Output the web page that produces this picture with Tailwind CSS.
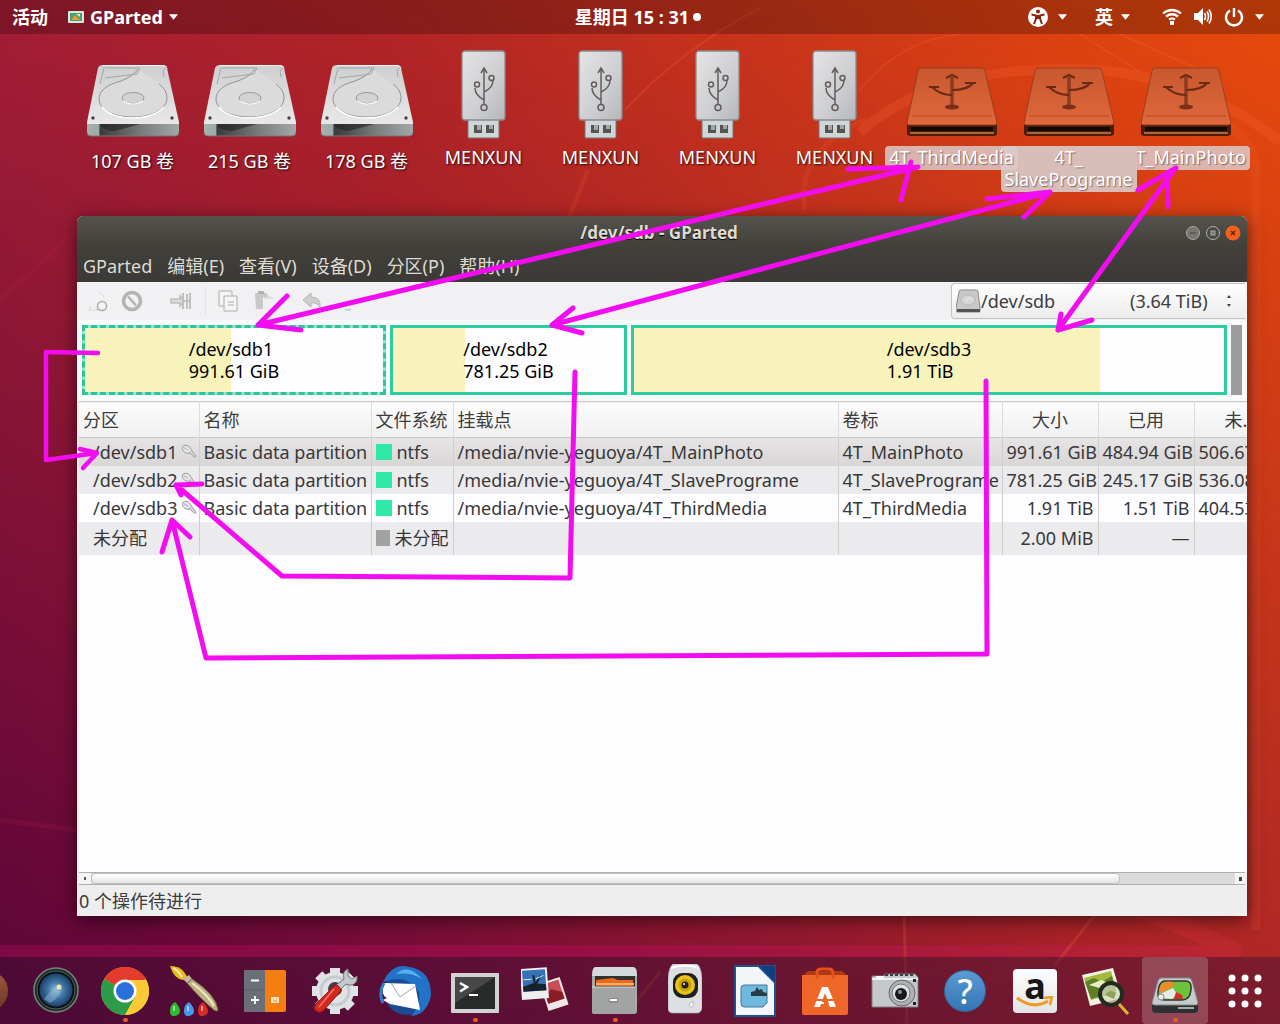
<!DOCTYPE html>
<html lang="zh-CN">
<head>
    <meta charset="UTF-8">
    <meta name="viewport" content="width=device-width, initial-scale=1.0">
    <title>/dev/sdb - GParted</title>
    <script src="https://cdn.jsdelivr.net/npm/@tailwindcss/browser@4"></script>
</head>
<body class="relative flex min-h-screen flex-col overflow-hidden bg-[#8a1030] font-['Noto_Sans','Noto_Sans_CJK_SC',sans-serif] text-[18px] leading-[22px] text-[#3c3c3c]">

    <!-- Wallpaper -->
    <svg class="absolute inset-0 -z-10 h-full w-full" viewBox="0 0 1280 1024" preserveAspectRatio="none" aria-hidden="true">
        <defs>
            <linearGradient id="wpTop"><stop offset="0" stop-color="#a51f35"/><stop offset=".3" stop-color="#b42526"/><stop offset=".55" stop-color="#c8331c"/><stop offset=".8" stop-color="#dc4211"/><stop offset="1" stop-color="#e74b0b"/></linearGradient>
            <linearGradient id="wpBottom"><stop offset="0" stop-color="#5a0439"/><stop offset=".3" stop-color="#6f0a39"/><stop offset=".6" stop-color="#8a1531"/><stop offset=".85" stop-color="#a31f2a"/><stop offset="1" stop-color="#ac2527"/></linearGradient>
            <linearGradient id="wpFade" x2="0" y2="1"><stop offset="0" stop-color="#000"/><stop offset="1" stop-color="#fff"/></linearGradient>
            <linearGradient id="wpBand"><stop offset="0" stop-color="#7e0845"/><stop offset=".5" stop-color="#981044"/><stop offset="1" stop-color="#bb2630"/></linearGradient>
            <mask id="wpMask"><rect width="1280" height="1024" fill="url(#wpFade)"/></mask>
        </defs>
        <rect width="1280" height="1024" fill="url(#wpTop)"/>
        <rect width="1280" height="1024" fill="url(#wpBottom)" mask="url(#wpMask)"/>
        <rect y="945" width="1238" height="12" fill="url(#wpBand)"/>
        <path d="M1160 915l30 4 52 26v10l-12 1-100-41z" fill="#bd2a2e" opacity=".7"/>
        <g fill="none" stroke="#ff6a3a" stroke-opacity=".22">
            <path d="M860 132Q930 70 1060 69T1280 142" stroke-width="10"/>
            <path d="M860 90Q900 40 960 34M1080 34l60 38M1120 34l80 36M625 110Q680 50 760 8" stroke-width="2"/>
            <path d="M1220 120q36 20 36 50v760" stroke-width="9" stroke-opacity=".13"/>
            <path d="M588 170l-20 50M805 210q-10-60 60-90" stroke-width="5" stroke-opacity=".14"/>
            <path d="M1095 915l-40 50M904 915l3 109M660 972l-26 32" stroke-width="3"/>
        </g>
        <path d="M0 300L77 230M0 820l77 10" stroke="#c02050" stroke-opacity=".15" stroke-width="5"/>
    </svg>

    <!-- Shared drawings -->
    <svg class="absolute h-0 w-0" aria-hidden="true">
        <defs>
            <linearGradient id="metal" x2="0" y2="1"><stop offset="0" stop-color="#cfcfd0"/><stop offset="1" stop-color="#e9e7e8"/></linearGradient>
            <linearGradient id="metalFront"><stop offset="0" stop-color="#aab0b0"/><stop offset=".13" stop-color="#9aa"/><stop offset=".14" stop-color="#3a3a3a"/><stop offset=".6" stop-color="#7a7c7d"/><stop offset="1" stop-color="#a5a8a9"/></linearGradient>
            <linearGradient id="stick" x2="1" y2="1"><stop offset="0" stop-color="#e4e4e5"/><stop offset=".6" stop-color="#cdced1"/><stop offset="1" stop-color="#b4b7ba"/></linearGradient>
            <linearGradient id="orangeTop" x2="0" y2="1"><stop offset="0" stop-color="#c8582f"/><stop offset="1" stop-color="#e0683c"/></linearGradient>
            <symbol id="harddisk" viewBox="0 0 96 96">
                <path d="M2 73h92v10q0 3-4 3H6q-4 0-4-3z" fill="url(#metalFront)"/>
                <path d="M15 74h40L30 81q-12 0-15-7z" fill="#222" opacity=".6"/>
                <path d="M2 82q0 4 4 4h84q4 0 4-4" fill="none" stroke="#777" stroke-width="1"/>
                <path d="M18 15h60q3 0 4 3l12 54v2H2v-2l11-54q1-3 5-3z" fill="url(#metal)"/>
                <path d="M18 15.500h60q3 0 4 3" fill="none" stroke="#f6f6f6" stroke-width="1"/>
                <path d="M53 19Q49 26 36 31C21 35 14 41 14 49c0 11 15 18 34 18s34-8 34-19c0-6-3-10-8-14" fill="#dcdbdc" stroke="#8f9296" stroke-width="1"/>
                <path d="M17 57c5 7 17 11 31 11s26-5 31-11" fill="none" stroke="#fff" stroke-width="1.500"/>
                <path d="M19 18l-4 16M20 18h35l-3 6-32 4M79 27l-1-6 4-5" fill="none" stroke="#9ba9ad" stroke-width="1"/>
                <ellipse cx="48" cy="48" rx="11" ry="5.500" fill="#d4d3d4" stroke="#999" stroke-width="1"/>
                <path d="M38 51q10 6 20 0" fill="none" stroke="#fff" stroke-width="1.200"/>
                <circle cx="8" cy="68" r="1.700" fill="#444"/><circle cx="87" cy="68" r="1.700" fill="#444"/>
            </symbol>
            <symbol id="usbstick" viewBox="0 0 96 96">
                <rect x="32" y="69" width="31" height="19" rx="1" fill="#cfd6d8" stroke="#777" stroke-width="1"/>
                <rect x="26" y="1" width="43" height="69" rx="3" fill="url(#stick)" stroke="#8b8b8c" stroke-width="1.300"/>
                <path d="M38 75h8v8h-8zM50 75h8v8h-8z" fill="#545452"/><path d="M41 75h4v5h-4zM53 75h4v4h-4z" fill="#a5a5a5"/>
                <g fill="none" stroke="#665c5c" stroke-width="1.500"><path d="M48 54V19M45 23l3-5 3 5M48 50Q39 45 39 38M48 42q9-4 9-12"/><circle cx="41" cy="34.500" r="2.500"/><circle cx="55.500" cy="28" r="2.500"/><circle cx="48" cy="57.500" r="3"/></g>
            </symbol>
            <symbol id="usbdisk" viewBox="0 0 96 96">
                <path d="M3 74h90v9q0 3-4 3H7q-4 0-4-3z" fill="#4a1d0c"/><path d="M7 77h82v4H7z" fill="#160803"/><path d="M6 82h84v2H6z" fill="#a86638"/>
                <path d="M16 18h62q2 0 3 3l12 52q0 2-2 2H5q-2 0-2-2l11-52q1-3 2-3z" fill="url(#orangeTop)" stroke="#8a3a1a" stroke-width=".8"/>
                <path d="M8 66h80" stroke="#b04a25" stroke-width="1"/>
                <g fill="none" stroke="#6b2a14" stroke-width="2.200"><path d="M48 57V27" stroke="#8a3c20" stroke-width="3.500"/><path d="M42 28l6-3 6 3"/><path d="M48 45Q36 45 28 37M25 37h10M48 40q16 0 21-7M61 33h11"/></g>
                <ellipse cx="48" cy="57" rx="7" ry="2.600" fill="#7a2f16"/>
            </symbol>
            <symbol id="key" viewBox="0 0 18 18"><ellipse cx="6.500" cy="6" rx="5.500" ry="4" transform="rotate(35 6.500 6)" fill="#e6e5e5" stroke="#9a9999"/><path d="M3 4l5 3" stroke="#aaa"/><path d="M9 9l6 6 2-1-5-7" fill="#d5d3d4" stroke="#9a9999"/></symbol>
            <symbol id="caret" viewBox="0 0 10 6"><path d="M0 0h10L5 6z" fill="#fff"/></symbol>
        </defs>
    </svg>

    <!-- Top panel -->
    <header class="flex h-[34px] shrink-0 items-center justify-between bg-black/24 pl-3 font-bold text-white [text-shadow:0_1px_2px_rgb(0_0_0/0.7)]">
        <div class="flex flex-1 items-center gap-5">
            <button>活动</button>
            <button class="flex items-center gap-[6px]">
                <svg class="h-3 w-4" viewBox="0 0 16 12" aria-hidden="true"><rect width="16" height="12" rx="1" fill="#d8e6df"/><rect x="2" y="2" width="12" height="8" fill="#4aa070"/><path d="M3 9l4-5 5 5z" fill="#e2a02c"/><path d="M8 3h4v3z" fill="#f5e9a0"/></svg>
                GParted
                <svg class="h-[6px] w-[9px]" aria-hidden="true"><use href="#caret"/></svg>
            </button>
        </div>
        <button class="flex items-center gap-1">星期日 15 : 31<span class="h-2 w-2 rounded-full bg-white"></span></button>
        <div class="flex flex-1 items-center justify-end pr-4">
            <button class="mr-7 flex items-center gap-[10px]" aria-label="辅助功能">
                <svg class="h-5 w-5" viewBox="0 0 20 20"><circle cx="10" cy="10" r="10" fill="#fff"/><circle cx="10" cy="4.500" r="2" fill="#8d2410"/><path d="M3.500 7.500L8 8.500v3l-2 5.500M16.500 7.500L12 8.500v3l2 5.500M8 9.500h4M10 8v4" fill="none" stroke="#8d2410" stroke-width="2"/></svg>
                <svg class="h-[6px] w-[9px]"><use href="#caret"/></svg>
            </button>
            <button class="mr-8 flex items-center gap-2">英<svg class="h-[6px] w-[9px]" aria-hidden="true"><use href="#caret"/></svg></button>
            <button class="flex items-center gap-[11px]" aria-label="系统菜单">
                <svg class="h-5 w-5" viewBox="0 0 20 20" fill="none" stroke="#fff" stroke-width="2.200"><path d="M1 6.500Q10-.5 19 6.500M4 9.500q6-4.500 12 0M7 12.500q3-2 6 0"/><path d="M8 14h4v4H8z" fill="#fff" stroke="none"/></svg>
                <svg class="h-5 w-5" viewBox="0 0 20 20" fill="none" stroke="#fff" stroke-width="1.600"><path d="M1 6h4l5-5v17l-5-5H1z" fill="#fff" stroke="none"/><path d="M11.500 6q2 3.500 0 7M14 4.500q3 5 0 10M16 2.500q4.500 7 0 14"/></svg>
                <svg class="h-5 w-5" viewBox="0 0 20 20" fill="none" stroke="#fff" stroke-width="2.400"><path d="M6 3.500a8 8 0 1 0 8 0M10 1v9"/></svg>
                <svg class="h-[6px] w-[9px]"><use href="#caret"/></svg>
            </button>
        </div>
    </header>

    <!-- Desktop icons -->
    <section class="flex h-[182px] shrink-0 items-start pt-4 pl-[74px] text-center whitespace-nowrap text-white *:flex *:w-[117px] *:shrink-0 *:flex-col *:items-center [text-shadow:1px_1px_2px_rgb(0_0_0/0.8)]">
        <div><svg class="h-24 w-24"><use href="#harddisk"/></svg><span class="leading-[30px]">107 GB 卷</span></div>
        <div><svg class="h-24 w-24"><use href="#harddisk"/></svg><span class="leading-[30px]">215 GB 卷</span></div>
        <div><svg class="h-24 w-24"><use href="#harddisk"/></svg><span class="leading-[30px]">178 GB 卷</span></div>
        <div><svg class="h-24 w-24"><use href="#usbstick"/></svg><span>MENXUN</span></div>
        <div><svg class="h-24 w-24"><use href="#usbstick"/></svg><span>MENXUN</span></div>
        <div><svg class="h-24 w-24"><use href="#usbstick"/></svg><span>MENXUN</span></div>
        <div><svg class="h-24 w-24"><use href="#usbstick"/></svg><span>MENXUN</span></div>
        <div class="relative z-10"><svg class="h-24 w-24"><use href="#usbdisk"/></svg><span class="rounded bg-[#dccaca]/85 px-1 pb-[2px] [text-shadow:1px_1px_1px_rgb(90_70_70/0.7)]">4T_ThirdMedia</span></div>
        <div class="relative"><svg class="h-24 w-24"><use href="#usbdisk"/></svg><span class="rounded bg-[#d9bdb9] px-1 pb-[2px] [text-shadow:1px_1px_1px_rgb(90_70_70/0.7)]">4T_<br>SlavePrograme</span></div>
        <div><svg class="h-24 w-24"><use href="#usbdisk"/></svg><span class="rounded bg-[#dccaca]/85 px-1 pb-[2px] [text-shadow:1px_1px_1px_rgb(90_70_70/0.7)]">4T_MainPhoto</span></div>
    </section>

    <!-- GParted window -->
    <main class="mr-[33px] mb-[41px] ml-[77px] flex flex-1 flex-col overflow-hidden rounded-t-md bg-[#efeeef] shadow-[0_4px_18px_rgb(0_0_0/0.55)]">
        <div class="bg-linear-to-b from-[#55534c] via-[#403f3a] to-[#3b3a36] text-[#dfdbd2]">
            <div class="flex h-[33px] items-center">
                <span class="flex-1"></span>
                <h1 class="text-[17px] font-bold [text-shadow:0_1px_1px_#000]">/dev/sdb - GParted</h1>
                <div class="flex flex-1 justify-end gap-1 pr-[6px]">
                    <button aria-label="最小化"><svg class="h-4 w-4" viewBox="0 0 16 16"><circle cx="8" cy="8" r="6.500" fill="#777670" stroke="#aaa9a2"/><path d="M5 8h6" stroke="#55544f" stroke-width="1.500"/></svg></button>
                    <button aria-label="最大化"><svg class="h-4 w-4" viewBox="0 0 16 16"><circle cx="8" cy="8" r="6.500" fill="#4a4944" stroke="#b5b4ad"/><rect x="6" y="6" width="4" height="4" fill="#777" stroke="#aaa"/></svg></button>
                    <button aria-label="关闭"><svg class="h-4 w-4" viewBox="0 0 16 16"><circle cx="8" cy="8" r="7.500" fill="#f0601f"/><path d="M6 6l4 4m0-4l-4 4" stroke="#6a2408" stroke-width="1.500"/></svg></button>
                </div>
            </div>
            <nav class="flex h-[33px] items-center gap-[15px] pl-[6px]">
                <button>GParted</button>
                <button>编辑(E)</button>
                <button>查看(V)</button>
                <button>设备(D)</button>
                <button>分区(P)</button>
                <button>帮助(H)</button>
            </nav>
        </div>

        <!-- Toolbar -->
        <div class="flex h-[38px] items-center justify-between bg-[#f1f0f2] pr-[2px] pl-2">
            <div class="flex items-center">
                <button class="mr-3" aria-label="新建"><svg class="h-6 w-6" viewBox="0 0 24 24" fill="none" stroke="#c5c4c4"><path d="M3 21h9M14 3l5 5" stroke="#d8d7d8"/><circle cx="17" cy="17" r="4.500" fill="#f5f5f5" stroke="#aaa" stroke-width="1.500"/><path d="M4 19l2-1M11 20l3 1"/></svg></button>
                <button class="mr-6" aria-label="删除"><svg class="h-6 w-6" viewBox="0 0 24 24" fill="none" stroke="#b5b3b2" stroke-width="3.500"><circle cx="11" cy="12" r="8.500"/><path d="M7 7.500l8 9" stroke-width="2.500"/></svg></button>
                <button class="mr-3" aria-label="调整大小/移动"><svg class="h-6 w-6" viewBox="0 0 24 24" fill="none" stroke="#c0bfbf" stroke-width="1.500"><path d="M2 10h9V7l4 5-4 5v-3H2z" fill="#dcdbdc"/><path d="M14 4v16M18 5v15M21 4v16M14 12h8" stroke-width="2"/></svg></button>
                <span class="mr-3 h-7 w-px bg-[#e2e1e3]"></span>
                <button class="mr-3" aria-label="复制"><svg class="h-6 w-6" viewBox="0 0 24 24" fill="#f5f5f6" stroke="#c3c2c3" stroke-width="1.500"><rect x="1" y="2" width="13" height="15" rx="1"/><rect x="6" y="7" width="13" height="15" rx="1"/><path d="M10 13h6M10 16h6"/></svg></button>
                <button class="mr-6" aria-label="粘贴"><svg class="h-6 w-6" viewBox="0 0 24 24" fill="#c9c8c8"><path d="M1 4h11l3 4H9v12H2z"/><path d="M4 2h6v3H4z" fill="#b3b2b2"/><path d="M10 9h9" stroke="#ddd" stroke-width="2"/></svg></button>
                <button class="mr-4" aria-label="撤销"><svg class="h-6 w-6" viewBox="0 0 24 24"><path d="M1 11l8-7v4q10 0 9 10-3-5-9-4v4z" fill="#cfcece" stroke="#b7b6b6"/></svg></button>
                <button aria-label="应用"><svg class="h-6 w-6" viewBox="0 0 24 24"><path d="M3 20q3 2 6 0" fill="none" stroke="#b8e4cd" stroke-width="2"/></svg></button>
            </div>
            <label class="flex h-9 items-center rounded-l border border-r-0 border-[#c4c2c3] bg-linear-to-b from-white to-[#ececed] pr-[14px] pl-1" aria-label="设备">
                <svg class="h-6 w-[25px]" viewBox="0 0 25 24" aria-hidden="true"><path d="M5 1h15q2 0 2 2l2 16v3q0 1-1 1H1q-1 0-1-1v-3L3 3q0-2 2-2z" fill="#c9c9ca" stroke="#8a8a8a"/><path d="M1 20h23v3H1z" fill="#555"/><ellipse cx="12" cy="11" rx="7" ry="5" fill="#d6d6d7" stroke="#bbb"/><path d="M9 12q3-4 7-2" fill="none" stroke="#eee"/></svg>
                <select class="w-[246px] appearance-none bg-transparent">
                    <option>/dev/sdb&nbsp;&nbsp;&nbsp;&nbsp;&nbsp;&nbsp;&nbsp;&nbsp;&nbsp;&nbsp;&nbsp;&nbsp;&nbsp;&nbsp;&nbsp;&nbsp;(3.64 TiB)</option>
                </select>
                <svg class="h-3 w-1" viewBox="0 0 4 12" aria-hidden="true"><path d="M0 3l2-3 2 3zM0 9l2 3 2-3z" fill="#444"/></svg>
            </label>
        </div>

        <!-- Disk map -->
        <div class="flex h-[81px] gap-1 bg-[#fafafb] px-[5px] pt-[5px] pb-[6px] text-black">
            <div class="relative flex basis-0 grow-[298] items-center justify-center border-3 border-dashed border-[#2cc498] bg-[#8ee9cb]">
                <div class="absolute inset-0 bg-[#fdfdff]"></div>
                <div class="absolute inset-y-0 left-0 bg-[#f8f3bb]" style="width:49%"></div>
                <p class="relative">/dev/sdb1<br>991.61 GiB</p>
            </div>
            <div class="relative flex basis-0 grow-[231] items-center justify-center border-3 border-[#29cd9e] bg-[#fdfdff]">
                <div class="absolute inset-y-0 left-0 bg-[#f8f3bb]" style="width:31%"></div>
                <p class="relative">/dev/sdb2<br>781.25 GiB</p>
            </div>
            <div class="relative flex basis-0 grow-[590] items-center justify-center border-3 border-[#29cd9e] bg-[#fdfdff]">
                <div class="absolute inset-y-0 left-0 bg-[#f8f3bb]" style="width:79%"></div>
                <p class="relative">/dev/sdb3<br>1.91 TiB</p>
            </div>
            <div class="w-[11px] bg-[#9c9b9d]"></div>
        </div>

        <!-- Partition list -->
        <div class="ml-[2px] flex-1 overflow-hidden bg-[#fdfcfe]">
            <table class="w-full table-fixed border-collapse whitespace-nowrap">
                <colgroup>
                    <col class="w-[120px]"><col class="w-[172px]"><col class="w-[82px]"><col class="w-[385px]"><col class="w-[164px]"><col class="w-[96px]"><col class="w-[96px]"><col>
                </colgroup>
                <thead class="border-y border-[#c9c7c8] bg-linear-to-b from-[#fdfcfd] to-[#f1f0f1]">
                    <tr class="h-9 text-left *:overflow-hidden *:border-r *:border-[#dddbdc] *:px-1 *:font-normal *:last:border-r-0">
                        <th>分区</th><th>名称</th><th>文件系统</th><th>挂载点</th><th>卷标</th><th class="text-center">大小</th><th class="text-center">已用</th><th class="pr-0! pl-[30px]!">未...</th>
                    </tr>
                </thead>
                <tbody class="text-[#383838] *:*:overflow-hidden *:*:border-r *:*:border-[#cfcdce] *:*:px-1 *:*:last:border-r-0 *:*:last:pr-0">
                    <tr class="h-7 bg-linear-to-b from-[#e6e4e5] to-[#d9d6d6]">
                        <td><span class="flex items-center gap-1 pl-[10px]">/dev/sdb1<svg class="h-[18px] w-4 shrink-0"><use href="#key"/></svg></span></td>
                        <td>Basic data partition</td>
                        <td><span class="flex items-center gap-[5px]"><i class="h-4 w-4 bg-[#2fe9a6]"></i>ntfs</span></td>
                        <td>/media/nvie-yeguoya/4T_MainPhoto</td>
                        <td>4T_MainPhoto</td>
                        <td class="text-right">991.61 GiB</td>
                        <td class="text-right">484.94 GiB</td>
                        <td>506.67 GiB</td>
                    </tr>
                    <tr class="h-7 bg-[#ebeaec]">
                        <td><span class="flex items-center gap-1 pl-[10px]">/dev/sdb2<svg class="h-[18px] w-4 shrink-0"><use href="#key"/></svg></span></td>
                        <td>Basic data partition</td>
                        <td><span class="flex items-center gap-[5px]"><i class="h-4 w-4 bg-[#2fe9a6]"></i>ntfs</span></td>
                        <td>/media/nvie-yeguoya/4T_SlavePrograme</td>
                        <td>4T_SlavePrograme</td>
                        <td class="text-right">781.25 GiB</td>
                        <td class="text-right">245.17 GiB</td>
                        <td>536.08 GiB</td>
                    </tr>
                    <tr class="h-7">
                        <td><span class="flex items-center gap-1 pl-[10px]">/dev/sdb3<svg class="h-[18px] w-4 shrink-0"><use href="#key"/></svg></span></td>
                        <td>Basic data partition</td>
                        <td><span class="flex items-center gap-[5px]"><i class="h-4 w-4 bg-[#2fe9a6]"></i>ntfs</span></td>
                        <td>/media/nvie-yeguoya/4T_ThirdMedia</td>
                        <td>4T_ThirdMedia</td>
                        <td class="text-right">1.91 TiB</td>
                        <td class="text-right">1.51 TiB</td>
                        <td>404.53 GiB</td>
                    </tr>
                    <tr class="h-[33px] bg-[#ebeaec]">
                        <td><span class="pl-[10px]">未分配</span></td>
                        <td></td>
                        <td><span class="flex items-center gap-[5px]"><i class="h-4 w-4 bg-[#a3a2a3]"></i>未分配</span></td>
                        <td></td>
                        <td></td>
                        <td class="text-right">2.00 MiB</td>
                        <td class="text-right">—</td>
                        <td></td>
                    </tr>
                </tbody>
            </table>
        </div>

        <!-- Horizontal scrollbar -->
        <div class="mx-[2px] flex h-[13px] items-stretch border-y border-[#b0aeaf] bg-[#dddcdd]">
            <span class="flex w-3 items-center justify-center bg-[#f5f4f5]"><i class="h-[3px] w-[2px] bg-[#555]"></i></span>
            <span class="basis-0 grow-[1028] rounded border border-[#c0bebf] bg-linear-to-b from-white to-[#e6e4e5]"></span>
            <span class="basis-0 grow-[115]"></span>
            <span class="flex w-[10px] items-center justify-center bg-[#f5f4f5]"><i class="h-[4px] w-[3px] bg-[#444]"></i></span>
        </div>
        <footer class="flex h-[31px] items-center pl-[2px]">0 个操作待进行</footer>
    </main>

    <!-- Dock -->
    <nav class="relative flex h-[67px] shrink-0 items-center bg-[#3c1236]/45 pl-5 *:relative *:flex *:h-full *:w-[70px] *:shrink-0 *:items-center *:justify-center" aria-label="Dock">
        <span class="absolute! left-[-32px] h-10! w-10! rounded-full bg-linear-to-b from-[#9a5a3e] to-[#6e3424]"></span>
        <a href="#lens" aria-label="镜头"><svg class="h-12 w-12" viewBox="0 0 48 48"><defs><radialGradient id="lens" cx=".5" cy=".5"><stop offset="0" stop-color="#9fc0d8"/><stop offset=".5" stop-color="#3f76a6"/><stop offset="1" stop-color="#1b4168"/></radialGradient></defs><circle cx="25" cy="23" r="22" fill="#1e2b2a" stroke="#77867c" stroke-width="1.500"/><circle cx="25" cy="23" r="19" fill="#0c1213" stroke="#56635c"/><circle cx="25" cy="23" r="16.500" fill="url(#lens)"/><path d="M13 32q6-8 14-13l4 3q-4 10-12 14z" fill="#8fb8d6" opacity=".5"/><circle cx="28" cy="20" r="2.500" fill="#f5e6a8"/></svg></a>
        <a href="#chrome" aria-label="Google Chrome"><svg class="h-12 w-12" viewBox="0 0 48 48"><circle cx="24" cy="24" r="24" fill="#fbc02d"/><path d="M24 24L3.200 12A24 24 0 0 1 44.800 12z" fill="#e33b2e"/><path d="M3.200 12A24 24 0 0 0 24 48l10.400-18z" fill="#2c9b4a"/><path d="M24 13h21.300A24 24 0 0 1 24 48l10-18z" fill="#fcc934"/><circle cx="24" cy="24" r="11.500" fill="#fff"/><circle cx="24" cy="24" r="9" fill="#2a6fdc"/></svg><i class="absolute bottom-[2px] h-1 w-[5px] rounded-full bg-[#ee5a20]"></i></a>
        <a href="#paint" aria-label="画图"><svg class="h-[54px] w-[54px]" viewBox="0 0 54 54"><path d="M2 2q10 0 14 6l4 6-5 2Q6 15 2 2z" fill="#edb91e"/><path d="M5 4q5 2 9 9" stroke="#fff0a0" stroke-width="2" fill="none"/><path d="M15 15l6-4 3 4-5 4z" fill="#c3b9a2"/><path d="M19 19l5-4Q48 31 50 46q-1 2-4 0Q34 36 19 19z" fill="#beb283" stroke="#7c6c45"/><path d="M24 19q16 12 22 23" stroke="#efe9cf" stroke-width="2" fill="none"/><path d="M7 38q5 5 5 9t-5 5-5-5 5-9z" fill="#2dbb30"/><path d="M21 38q5 5 5 9t-5 5-5-5 5-9z" fill="#4797ed"/><path d="M35 38q5 5 5 9t-5 5-5-5 5-9z" fill="#d62a25"/><path d="M6 42v5M20 42v5M34 42v5" stroke="#fff" stroke-opacity=".5" stroke-width="2"/></svg></a>
        <a href="#calculator" aria-label="计算器"><svg class="h-[42px] w-[42px]" viewBox="0 0 42 42"><rect width="42" height="42" rx="2" fill="#f67d10"/><path d="M2 0h19v42H2q-2 0-2-2V2q0-2 2-2z" fill="#6a6f78"/><path d="M0 20h21" stroke="#5a5e67"/><path d="M7 10.500h8M7 30h8M11 26v8" stroke="#fff" stroke-width="2"/><path d="M27 27h8v6h-8z" fill="#ffe8cc"/><path d="M29 29h1m3 0h-1m-3 2h4" stroke="#f67d10"/></svg></a>
        <a href="#tweaks" aria-label="设置"><svg class="h-12 w-12" viewBox="0 0 48 48"><g fill="#dfe3e6"><circle cx="24" cy="24" r="19"/><path d="M19 1h10v46H19zM1 19h46v10H1z"/><path d="M19 1h10v46H19zM1 19h46v10H1z" transform="rotate(45 24 24)"/></g><circle cx="24" cy="24" r="14" fill="none" stroke="#c3ccd1" stroke-width="3"/><circle cx="24" cy="22" r="7" fill="#4c3b46"/><path d="M24 19l9-7q-2-8 4-10v7l4 3 5-3q1 8-6 9-4 0-5-1l-7 7z" fill="#c4c8cc" stroke="#72777c"/><path d="M24 18q5 0 6 6L12 44q-4 3-8-1-2-3 1-6z" fill="#d4281e" stroke="#93150e"/><path d="M23 22L8 40" stroke="#f0776b" stroke-width="1.500"/></svg></a>
        <a href="#mail" aria-label="Thunderbird"><svg class="h-[52px] w-[52px]" viewBox="0 0 52 52"><circle cx="28" cy="27" r="23" fill="#1a4b93"/><path d="M4 17Q14-3 30 2q22 3 22 28-4 20-20 21 10-10 8-24Q28 8 4 17z" fill="#2273c8"/><path d="M17 9Q29-2 43 14q-12-7-26-5z" fill="#56b0ec"/><path d="M5 18l31 1 5 26-30-6-7-4 4-2q-7-3-3-15z" fill="#fff"/><path d="M12 18l9 14 16-11" fill="none" stroke="#9aa7b5"/><path d="M5 18q-6 10-1 20" stroke="#2b7fcf" stroke-width="3" fill="none"/></svg></a>
        <a href="#terminal" aria-label="终端"><svg class="mt-1 h-10 w-12" viewBox="0 0 48 40"><rect width="48" height="40" rx="1" fill="#d2d2d5"/><rect x="4" y="4" width="40" height="32" fill="#292b2b"/><path d="M4 4h40L4 30z" fill="#464848"/><path d="M9 10l7 4-7 4.500" fill="none" stroke="#fff" stroke-width="2.500"/><path d="M18 22h9" stroke="#fff" stroke-width="2"/></svg><i class="absolute bottom-[2px] h-1 w-[5px] rounded-full bg-[#ee5a20]"></i></a>
        <a href="#photos" aria-label="照片"><svg class="h-12 w-12" viewBox="0 0 48 48"><g transform="rotate(-18 35 28)"><rect x="23" y="12" width="21" height="29" fill="#f0e8e8"/><rect x="25" y="14" width="17" height="20" fill="#c94d55"/><path d="M25 25l7-4 10 6v7H25z" fill="#8a1c26"/></g><g transform="rotate(-4 14 18)"><rect x="0" y="1" width="27" height="31" fill="#eee"/><rect x="2" y="3" width="23" height="21" fill="#3672b9"/><path d="M2 19l10-3 13 2v6H2z" fill="#18242b"/><path d="M13 8l1 9-4 5h7l-2-5 5-8" stroke="#16222a" stroke-width="2" fill="none"/><path d="M3 12l8 0M15 12l8-3" stroke="#d5e7f3"/></g></svg></a>
        <a href="#files" aria-label="文件"><svg class="h-12 w-12" viewBox="0 0 48 48"><path d="M5 0h36q4 0 5 4v40q0 3-3 3H4q-3 0-3-3V5q1-5 4-5z" fill="#a5aaa9"/><path d="M5 0h36q4 0 4 4l1 5H1l1-5q0-4 3-4z" fill="#d4dad9"/><rect x="4" y="9" width="40" height="11" fill="#33302e"/><path d="M5 13l17-2 5 2 15 0v6H5z" fill="#e76a1e"/><path d="M5 17h38" stroke="#f6b060" stroke-width="2"/><rect x="1" y="20" width="43" height="27" rx="2" fill="#a2a3a3"/><path d="M1 20h43" stroke="#ddd"/><rect x="18" y="31" width="9" height="5" fill="#8a8a8a"/><path d="M19 33h7" stroke="#fff" stroke-width="2"/></svg><i class="absolute bottom-[2px] h-1 w-[5px] rounded-full bg-[#ee5a20]"></i></a>
        <a href="#music" aria-label="Rhythmbox"><svg class="mb-1 h-[50px] w-[34px]" viewBox="0 0 34 50"><path d="M5 0h24q4 3 5 14v30q-1 5-5 5H5q-5 0-5-5V14Q1 3 5 0z" fill="#dddfe2" stroke="#aab" stroke-width=".7"/><path d="M3 4q14-5 28 0" stroke="#fff" stroke-width="2" fill="none"/><rect x="5" y="9" width="25" height="25" rx="9" fill="#1f1f1f"/><circle cx="17" cy="21" r="10" fill="#e9c417"/><circle cx="17" cy="21" r="6.500" fill="#c9a20a"/><circle cx="17" cy="21" r="3.500" fill="#222"/><circle cx="16" cy="20" r="1" fill="#fff"/><path d="M21 40l4-3v6h-3z" fill="#fff" stroke="#b9bcc2"/></svg></a>
        <a href="#draw" aria-label="LibreOffice Draw"><svg class="h-[52px] w-[42px]" viewBox="0 0 42 52"><path d="M0 0h42v52H0z" fill="#1c5291"/><path d="M2 2h22l16 16v32H2z" fill="#f3f5f8"/><path d="M26 1l15 16V1z" fill="#0f3f7d"/><path d="M10 20h23v18q-3 2-4 4H10q-3 0-3-4V23q0-3 3-3z" fill="#6eb9dd" stroke="#3e7b9b"/><path d="M17 31v-4l4-1 2-4 2 3 3-1 1 3 4 1v3z" fill="#293c43"/></svg></a>
        <a href="#software" aria-label="Ubuntu 软件"><svg class="h-[48px] w-[46px]" viewBox="0 0 46 48"><path d="M0 8h46v38q0 2-2 2H2q-2 0-2-2z" fill="#ee6728"/><path d="M2 8l4-4h34l4 4z" fill="#af3a12"/><path d="M15 12V6q0-4 4-4h8q4 0 4 4v6" fill="none" stroke="#e8511e" stroke-width="3"/><path d="M20 20h6l8 20h-6l-5-14-5 14h-6z" fill="#fff"/><path d="M11 33h24" stroke="#ee6728" stroke-width="2"/><path d="M14 36h8M27 38h6" stroke="#fff" stroke-width="2"/></svg></a>
        <a href="#camera" aria-label="Shotwell"><svg class="h-[36px] w-12" viewBox="0 0 48 36"><path d="M1 3h12l1-2h30l3 3v30H1z" fill="#c5c8cb" stroke="#787c80"/><path d="M1 6h46" stroke="#f0f0f0" stroke-width="2"/><path d="M14 2h28" stroke="#393e42" stroke-width="2" stroke-dasharray="3 2"/><rect x="5" y="3" width="8" height="3" fill="#eff7fb"/><circle cx="31" cy="20" r="13" fill="#aeb1b4" stroke="#64686c"/><circle cx="30" cy="20" r="9" fill="#dedfe1" stroke="#777"/><circle cx="30" cy="21" r="6" fill="#14181c"/><circle cx="29" cy="19" r="2" fill="#8393a3"/><path d="M42 6h3v3h-3zM42 29h3v3h-3z" fill="#222"/></svg></a>
        <a href="#help" aria-label="帮助"><span class="flex h-[42px] w-[42px] items-center justify-center rounded-full border border-[#2e6aa0] bg-linear-to-b from-[#5c9ad3] to-[#3475b5] text-[34px] font-medium text-white">?</span></a>
        <a href="#amazon" aria-label="Amazon"><span class="relative flex h-11 w-11 justify-center rounded bg-linear-to-b from-white to-[#e4e4e6] text-[36px] leading-[34px] font-bold text-[#171717]">a<svg class="absolute bottom-1 left-[3px] h-[13px] w-[38px]" viewBox="0 0 38 13"><path d="M1 2q17 12 31 3" fill="none" stroke="#f09a23" stroke-width="3"/><path d="M28 2l8-1-2 8" fill="none" stroke="#f09a23" stroke-width="2.500"/></svg></span></a>
        <a href="#viewer" aria-label="图像查看器"><svg class="h-12 w-12" viewBox="0 0 48 48"><path d="M1 8l31-7 9 30-32 8z" fill="#f2f2e8"/><path d="M3 11l27-7 6 22-26 7z" fill="#a5b83e"/><path d="M4 15l9-4 8 4 10-6 4 15-25 8z" fill="#5c7f28"/><path d="M8 18l12-5 10 4-8 5z" fill="#e8eec0"/><circle cx="30" cy="27" r="11" fill="#d6dbbb" fill-opacity=".75" stroke="#232a22" stroke-width="4"/><path d="M24 28q5-7 11-2l-2 6z" fill="#8ea35a"/><path d="M38 37l9 10" stroke="#d6b437" stroke-width="3"/></svg></a>
        <a href="#gparted" aria-label="GParted"><span class="flex h-full w-[66px] items-center justify-center rounded-sm bg-white/20"><svg class="mt-2 h-[36px] w-[46px]" viewBox="0 0 46 36"><path d="M0 25h46v7q0 4-4 4H4q-4 0-4-4z" fill="#2d3131"/><path d="M9 1h28q2 0 3 3l6 22q0 2-3 2H3q-3 0-3-2L6 4q1-3 3-3z" fill="#c6cbcb" stroke="#838989"/><path d="M12 4h22q6 0 5 9-1 10-9 10H13q-8 0-7-8 1-10 6-11z" fill="#6cc23a" stroke="#333" stroke-width="1.500"/><path d="M9 8q5-5 12-3v5L7 17q0-5 2-9z" fill="#ee8b2d"/><path d="M8 17l13-6 4 6-5 5-12-1z" fill="#e8eaea"/><path d="M24 15l6 3 1 4-9 0z" fill="#dc2a25"/><circle cx="9" cy="20" r="3" fill="#eee" stroke="#888"/><path d="M26 31h16" stroke="#a8adad" stroke-width="2"/></svg></span><i class="absolute bottom-[2px] h-1 w-[5px] rounded-full bg-[#ee5a20]"></i></a>
        <button aria-label="显示应用程序"><svg class="h-[34px] w-[34px]" viewBox="0 0 34 34" fill="#fff"><circle cx="4" cy="4" r="3.500"/><circle cx="17" cy="4" r="3.500"/><circle cx="30" cy="4" r="3.500"/><circle cx="4" cy="17" r="3.500"/><circle cx="17" cy="17" r="3.500"/><circle cx="30" cy="17" r="3.500"/><circle cx="4" cy="30" r="3.500"/><circle cx="17" cy="30" r="3.500"/><circle cx="30" cy="30" r="3.500"/></svg></button>
    </nav>

    <!-- Hand-drawn annotations -->
    <svg class="pointer-events-none absolute top-0 left-0 z-20 h-[1024px] w-[1280px]" viewBox="0 0 1280 1024" fill="none" stroke="#f20df0" stroke-width="5" stroke-linecap="round" stroke-linejoin="round" aria-hidden="true">
        <path d="M98 353l-52-1v108l51-7M80 449l17 4-14 15" stroke-width="4.500"/>
        <path d="M258 325L918 167M287 296l-29 29 43 5M848 169l70-2M901 200l10-38"/>
        <path d="M552 325l498-133M573 308l-21 17 30 8M987 199l63-7-26 25"/>
        <path d="M1058 330l116-160M1061 314l-3 16 34-10M1138 190l38-22M1168 207l-1-34"/>
        <path d="M575 372l-5 206-288-2-106-91M202 484l-26 1 5 10"/>
        <path d="M986 381l1 273-781 4-34-138M162 552l10-32 18 17M987 640v14"/>
    </svg>

</body>
</html>
